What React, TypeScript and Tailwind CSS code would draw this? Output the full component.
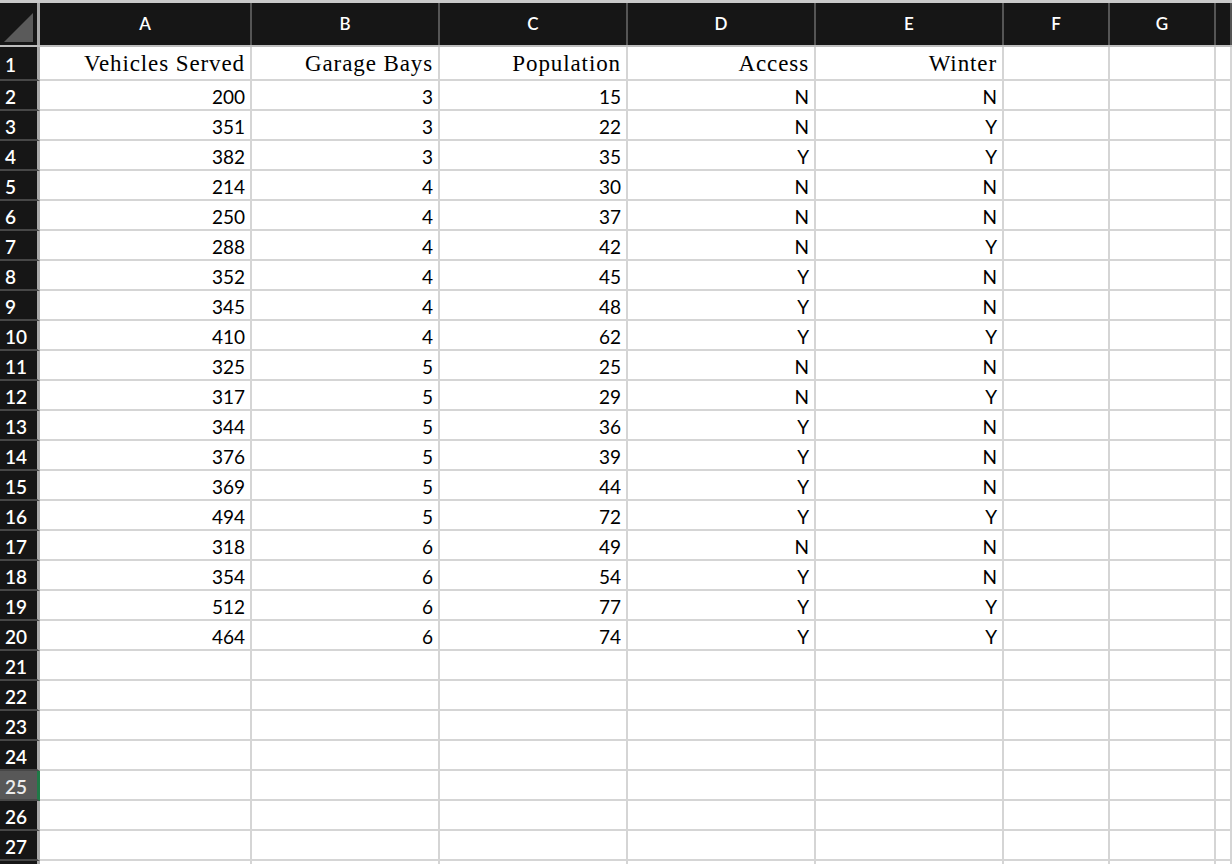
import type { ReactNode } from 'react'

const COLS = ['A', 'B', 'C', 'D', 'E', 'F', 'G', '']
const HEADERS = ['Vehicles Served', 'Garage Bays', 'Population', 'Access', 'Winter']

const vehicles = [200, 351, 382, 214, 250, 288, 352, 345, 410, 325, 317, 344, 376, 369, 494, 318, 354, 512, 464]
const bays = [3, 3, 3, 4, 4, 4, 4, 4, 4, 5, 5, 5, 5, 5, 5, 6, 6, 6, 6]
const population = [15, 22, 35, 30, 37, 42, 45, 48, 62, 25, 29, 36, 39, 44, 72, 49, 54, 77, 74]
const access = 'NNYNNNYYYNNYYYYNYYY'.split('')
const winter = 'NYYNNYNNYNYNNNYNNYY'.split('')

const GRID = 'grid grid-cols-[40px_212px_188px_188px_188px_188px_106px_106px_1fr]'
const SELECTED_ROW = 25
const VISIBLE_ROWS = 27

function RowHead({ n, tall }: { n: number; tall?: boolean }) {
  const selected = n === SELECTED_ROW
  return (
    <div
      className={`flex items-center border-b-2 border-r-[3px] border-b-[#474747] pl-[5px] pt-[2px] font-['Lato',sans-serif] text-[19px] font-semibold leading-none ${
        tall ? 'h-[34px]' : 'h-[30px]'
      } ${selected ? 'border-r-[#1f7a47] bg-[#585858] text-[#ececec]' : 'border-r-[#a9a9a9] bg-[#161616] text-white'}`}
    >
      {n <= VISIBLE_ROWS ? n : ''}
    </div>
  )
}

function Cell({ children, tall, serif }: { children?: ReactNode; tall?: boolean; serif?: boolean }) {
  return (
    <div
      className={`flex items-end justify-end overflow-hidden whitespace-nowrap border-b-2 border-r-2 border-[#d5d5d5] bg-white pr-[5px] text-black ${
        tall ? 'h-[34px] pb-[4px]' : 'h-[30px] pb-[3px]'
      } ${
        serif
          ? "font-['Liberation_Serif',serif] text-[23px] leading-none tracking-[0.9px]"
          : "font-['Lato',sans-serif] text-[19px] leading-none"
      }`}
    >
      {children}
    </div>
  )
}

export default function App() {
  const rows: ReactNode[][] = []
  rows.push([...HEADERS, '', '', ''])
  for (let i = 0; i < vehicles.length; i++) {
    rows.push([vehicles[i], bays[i], population[i], access[i], winter[i], '', '', ''])
  }
  while (rows.length < 28) rows.push(['', '', '', '', '', '', '', ''])

  return (
    <div className="h-[864px] w-[1232px] overflow-hidden bg-white">
      <div className="h-[3px] bg-[#c9c9c9]" />
      <div className={`${GRID} h-[44px] border-b-2 border-[#bdbdbd] bg-[#161616]`}>
        <div className="relative border-r-[3px] border-[#a9a9a9]">
          <svg className="absolute left-[4px] top-[10px]" width="30" height="29" viewBox="0 0 30 29">
            <polygon points="0,29 29,0 29,29" fill="#5a5a5a" />
          </svg>
        </div>
        {COLS.map((c, i) => (
          <div
            key={i}
            className="flex items-center justify-center border-r-2 border-[#555555] font-['Lato',sans-serif] text-[17px] font-semibold text-white"
          >
            {c}
          </div>
        ))}
      </div>

      {rows.map((cells, r) => (
        <div key={r} className={GRID}>
          <RowHead n={r + 1} tall={r === 0} />
          {cells.map((v, c) => (
            <Cell key={c} tall={r === 0} serif={r === 0}>
              {v}
            </Cell>
          ))}
        </div>
      ))}
    </div>
  )
}
